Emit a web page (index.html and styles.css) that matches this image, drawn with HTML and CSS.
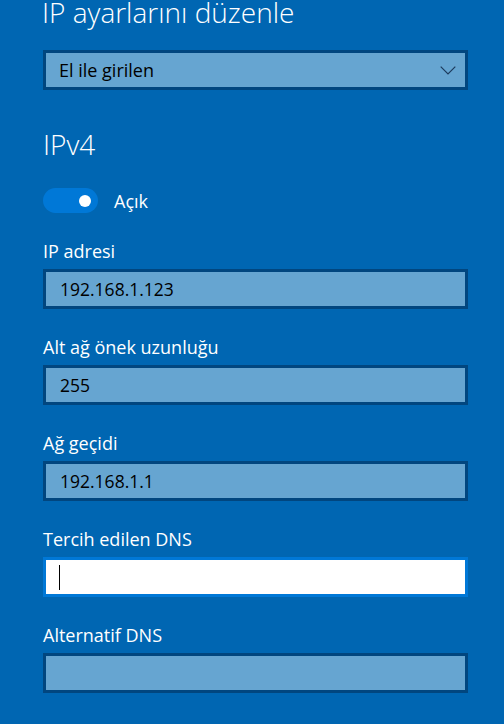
FILE: index.html
```html
<!DOCTYPE html>
<html lang="tr">
<head>
<meta charset="utf-8">
<title>IP ayarlarını düzenle</title>
<link rel="stylesheet" href="styles.css">
</head>
<body>
<main class="page">
  <h1 class="title">IP ayarlarını düzenle</h1>
  <div class="select">
    <span class="select-text">El ile girilen</span>
    <svg class="chevron" width="16" height="9" viewBox="0 0 16 9" aria-hidden="true">
      <polyline points="0.7,0.7 8,8 15.3,0.7" fill="none" stroke="#1d3b5c" stroke-width="1.2"/>
    </svg>
  </div>
  <h2 class="section">IPv4</h2>
  <div class="toggle-row">
    <span class="toggle"><span class="knob"></span></span>
    <span class="toggle-label">Açık</span>
  </div>
  <div class="group">
    <label class="label">IP adresi</label>
    <div class="input">192.168.1.123</div>
  </div>
  <div class="group">
    <label class="label">Alt ağ önek uzunluğu</label>
    <div class="input">255</div>
  </div>
  <div class="group">
    <label class="label">Ağ geçidi</label>
    <div class="input">192.168.1.1</div>
  </div>
  <div class="group">
    <label class="label">Tercih edilen DNS</label>
    <div class="input focused"><span class="caret"></span></div>
  </div>
  <div class="group">
    <label class="label">Alternatif DNS</label>
    <div class="input"></div>
  </div>
</main>
</body>
</html>
```
FILE: styles.css
```css
html, body {
  margin: 0;
  padding: 0;
  background: #0066b2;
  height: 100%;
  overflow: hidden;
}
body {
  font-family: "Open Sans", "Noto Sans", sans-serif;
  color: #fff;
}
.page {
  display: flex;
  flex-direction: column;
  padding: 0 36px 0 43px;
}
.title {
  margin: 0;
  font-size: 28px;
  font-weight: 300;
  line-height: 24px;
  margin-left: -1px;
}
.select {
  margin-top: 26px;
  height: 40px;
  box-sizing: border-box;
  border: 3px solid #01467f;
  background: #66a5d1;
  display: flex;
  align-items: center;
  justify-content: space-between;
  padding: 0 9px 0 13px;
  color: #000;
  font-size: 18px;
  line-height: 24px;
}
.chevron {
  display: block;
}
.section {
  margin: 42px 0 0;
  font-size: 28px;
  font-weight: 300;
  line-height: 24px;
}
.toggle-row {
  margin-top: 32px;
  display: flex;
  align-items: center;
  gap: 16px;
  height: 25px;
}
.toggle {
  width: 55px;
  height: 25px;
  border-radius: 13px;
  background: #0078d7;
  display: flex;
  align-items: center;
  justify-content: flex-end;
  padding-right: 7px;
  box-sizing: border-box;
}
.knob {
  width: 12px;
  height: 12px;
  border-radius: 50%;
  background: #fff;
}
.toggle-label {
  font-size: 18px;
  line-height: 24px;
}
.group {
  margin-top: 26px;
  display: flex;
  flex-direction: column;
}
.label {
  font-size: 18px;
  line-height: 24px;
  margin-bottom: 6px;
}
.input {
  height: 40px;
  box-sizing: border-box;
  border: 3px solid #01467f;
  background: #66a5d1;
  display: flex;
  align-items: center;
  padding: 0 14px;
  color: #000;
  font-size: 17.5px;
  line-height: 24px;
}
.input.focused {
  border-color: #0078d7;
  background: #fff;
  padding-left: 13px;
}
.caret {
  width: 1px;
  height: 25px;
  background: #000;
}
```
